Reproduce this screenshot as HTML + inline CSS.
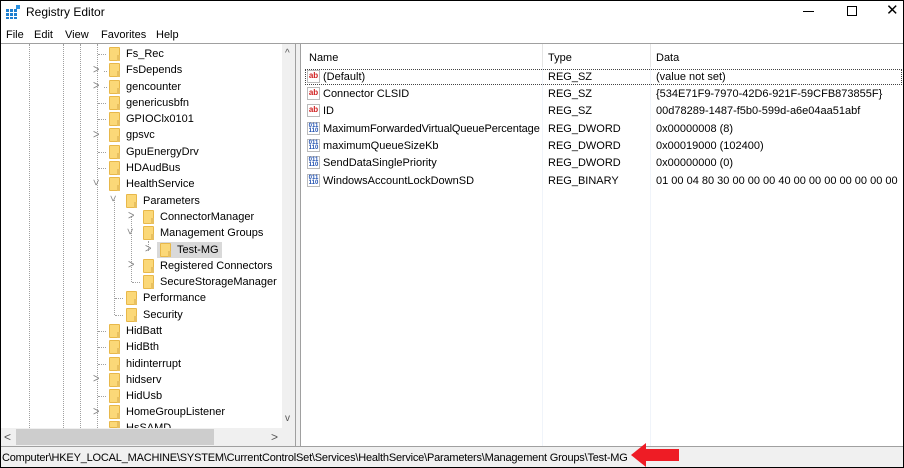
<!DOCTYPE html>
<html><head><meta charset="utf-8"><style>
*{margin:0;padding:0;box-sizing:border-box}
body{width:904px;height:468px;overflow:hidden;background:#fff;font-family:"Liberation Sans",sans-serif;font-size:11px;line-height:16px;color:#000;position:relative}
.a{position:absolute;white-space:nowrap}
.frame{position:absolute;left:0;top:0;width:904px;height:468px;border:1px solid #000;pointer-events:none}
.vd{position:absolute;width:0;border-left:1px dotted #a0a0a0}
.hd{position:absolute;height:0;border-top:1px dotted #a0a0a0}
.f{position:absolute;width:11px;height:14px;background:#fbd878;border:1px solid #e8b84a;border-radius:1px}
.f:after{content:"";position:absolute;right:-1px;bottom:-1px;width:3px;height:6px;background:#e8c060}
.ch{position:absolute;font-size:11px;line-height:13px;color:#888;transform:scaleY(1.2)}
.ic{position:absolute;width:13px;height:13px;border:1px solid #bbb;background:#fff;font-size:8px;font-weight:bold;line-height:10px;text-align:center}
.ab{color:#d02020}
.bin{color:#2050b0;font-size:6px;line-height:5px;padding-top:1px}
</style></head><body>
<svg class="a" style="left:6px;top:5px" width="14" height="14" viewBox="0 0 14 14"><g fill="#1e7fd0"><rect x="0" y="4" width="3" height="3"/><rect x="4" y="4" width="3" height="3"/><rect x="8" y="4" width="3" height="3"/><rect x="0" y="8" width="3" height="3"/><rect x="4" y="8" width="3" height="3"/><rect x="8" y="8" width="3" height="3"/><rect x="0" y="12" width="3" height="2"/><rect x="4" y="12" width="3" height="2"/><rect x="8" y="12" width="3" height="2"/><rect x="10" y="0" width="4" height="4" fill="#2a90e0"/></g></svg>
<div class="a" style="left:26px;top:4px;font-size:12px">Registry Editor</div>
<div class="a" style="left:803px;top:11px;width:11px;height:1px;background:#000"></div>
<div class="a" style="left:847px;top:6px;width:10px;height:10px;border:1px solid #000"></div>
<div class="a" style="left:886px;top:2px;font-size:15px;line-height:18px">✕</div>
<div class="a" style="left:6px;top:27px">File</div>
<div class="a" style="left:34px;top:27px">Edit</div>
<div class="a" style="left:65px;top:27px">View</div>
<div class="a" style="left:101px;top:27px">Favorites</div>
<div class="a" style="left:156px;top:27px">Help</div>
<div class="a" style="left:0;top:43px;width:904px;height:1px;background:#a0a0a0"></div>
<div class="vd" style="left:29px;top:44px;height:384px"></div>
<div class="vd" style="left:63px;top:44px;height:384px"></div>
<div class="vd" style="left:80px;top:44px;height:384px"></div>
<div class="vd" style="left:97px;top:44px;height:384px"></div>
<div class="vd" style="left:114px;top:200px;height:115px"></div>
<div class="vd" style="left:131px;top:216px;height:66px"></div>
<div class="vd" style="left:148px;top:241px;height:10px"></div>

<div class="hd" style="left:98px;top:54px;width:8px"></div><div class="f" style="left:109px;top:47px"></div><div class="a" style="left:126px;top:46px">Fs_Rec</div>
<div class="ch" style="left:93px;top:64px">&gt;</div><div class="hd" style="left:104px;top:71px;width:3px"></div><div class="f" style="left:109px;top:63px"></div><div class="a" style="left:126px;top:62px">FsDepends</div>
<div class="ch" style="left:93px;top:80px">&gt;</div><div class="hd" style="left:104px;top:87px;width:3px"></div><div class="f" style="left:109px;top:80px"></div><div class="a" style="left:126px;top:79px">gencounter</div>
<div class="hd" style="left:98px;top:103px;width:8px"></div><div class="f" style="left:109px;top:96px"></div><div class="a" style="left:126px;top:95px">genericusbfn</div>
<div class="hd" style="left:98px;top:119px;width:8px"></div><div class="f" style="left:109px;top:112px"></div><div class="a" style="left:126px;top:111px">GPIOClx0101</div>
<div class="ch" style="left:93px;top:129px">&gt;</div><div class="f" style="left:109px;top:128px"></div><div class="a" style="left:126px;top:127px">gpsvc</div>
<div class="hd" style="left:98px;top:152px;width:8px"></div><div class="f" style="left:109px;top:145px"></div><div class="a" style="left:126px;top:144px">GpuEnergyDrv</div>
<div class="hd" style="left:98px;top:168px;width:8px"></div><div class="f" style="left:109px;top:161px"></div><div class="a" style="left:126px;top:160px">HDAudBus</div>
<div class="ch" style="left:92px;top:176px;transform:rotate(90deg)">&gt;</div><div class="f" style="left:109px;top:177px"></div><div class="a" style="left:126px;top:176px">HealthService</div>
<div class="ch" style="left:109px;top:192px;transform:rotate(90deg)">&gt;</div><div class="f" style="left:126px;top:194px"></div><div class="a" style="left:143px;top:193px">Parameters</div>
<div class="ch" style="left:128px;top:210px">&gt;</div><div class="f" style="left:143px;top:210px"></div><div class="a" style="left:160px;top:209px">ConnectorManager</div>
<div class="ch" style="left:126px;top:225px;transform:rotate(90deg)">&gt;</div><div class="f" style="left:143px;top:226px"></div><div class="a" style="left:160px;top:225px">Management Groups</div>
<div class="a" style="left:157px;top:242px;width:65px;height:16px;background:#d9d9d9"></div>
<div class="ch" style="left:145px;top:243px">&gt;</div><div class="f" style="left:160px;top:243px"></div><div class="a" style="left:177px;top:242px">Test-MG</div>
<div class="ch" style="left:128px;top:259px">&gt;</div><div class="f" style="left:143px;top:259px"></div><div class="a" style="left:160px;top:258px">Registered Connectors</div>
<div class="hd" style="left:132px;top:282px;width:8px"></div><div class="f" style="left:143px;top:275px"></div><div class="a" style="left:160px;top:274px">SecureStorageManager</div>
<div class="hd" style="left:115px;top:298px;width:8px"></div><div class="f" style="left:126px;top:291px"></div><div class="a" style="left:143px;top:290px">Performance</div>
<div class="hd" style="left:115px;top:315px;width:8px"></div><div class="f" style="left:126px;top:308px"></div><div class="a" style="left:143px;top:307px">Security</div>
<div class="hd" style="left:98px;top:331px;width:8px"></div><div class="f" style="left:109px;top:324px"></div><div class="a" style="left:126px;top:323px">HidBatt</div>
<div class="hd" style="left:98px;top:347px;width:8px"></div><div class="f" style="left:109px;top:340px"></div><div class="a" style="left:126px;top:339px">HidBth</div>
<div class="hd" style="left:98px;top:364px;width:8px"></div><div class="f" style="left:109px;top:357px"></div><div class="a" style="left:126px;top:356px">hidinterrupt</div>
<div class="ch" style="left:93px;top:373px">&gt;</div><div class="f" style="left:109px;top:373px"></div><div class="a" style="left:126px;top:372px">hidserv</div>
<div class="hd" style="left:98px;top:396px;width:8px"></div><div class="f" style="left:109px;top:389px"></div><div class="a" style="left:126px;top:388px">HidUsb</div>
<div class="ch" style="left:93px;top:406px">&gt;</div><div class="f" style="left:109px;top:405px"></div><div class="a" style="left:126px;top:404px">HomeGroupListener</div>
<div class="f" style="left:109px;top:421px;height:7px"></div><div class="a" style="left:126px;top:420px;height:8px;overflow:hidden">HsSAMD</div>
<div class="a" style="left:282px;top:44px;width:13px;height:384px;background:#f0f0f0"></div>
<div class="a" style="left:285px;top:46px;font-size:10px;color:#555">^</div>
<div class="a" style="left:285px;top:411px;font-size:10px;color:#555">v</div>
<div class="a" style="left:0;top:428px;width:295px;height:18px;background:#f0f0f0"></div>
<div class="a" style="left:16px;top:429px;width:198px;height:16px;background:#cdcdcd"></div>
<div class="a" style="left:4px;top:429px;font-size:12px;color:#555">&lt;</div>
<div class="a" style="left:271px;top:429px;font-size:12px;color:#555">&gt;</div>
<div class="a" style="left:295px;top:44px;width:1px;height:403px;background:#a0a0a0"></div>
<div class="a" style="left:296px;top:44px;width:4px;height:403px;background:#f0f0f0"></div>
<div class="a" style="left:300px;top:44px;width:1px;height:403px;background:#a0a0a0"></div>
<div class="a" style="left:542px;top:44px;width:1px;height:23px;background:#e5e5e5"></div>
<div class="a" style="left:650px;top:44px;width:1px;height:23px;background:#e5e5e5"></div>
<div class="a" style="left:542px;top:67px;width:1px;height:380px;background:#f0f4fa"></div>
<div class="a" style="left:650px;top:67px;width:1px;height:380px;background:#f0f4fa"></div>
<div class="a" style="left:309px;top:50px">Name</div>
<div class="a" style="left:548px;top:50px">Type</div>
<div class="a" style="left:656px;top:50px">Data</div>
<div class="a" style="left:305px;top:69px;width:597px;height:16px;border:1px dotted #444"></div>

<div class="ic ab" style="left:307px;top:70px">ab</div><div class="a" style="left:323px;top:69px">(Default)</div><div class="a" style="left:548px;top:69px">REG_SZ</div><div class="a" style="left:656px;top:69px">(value not set)</div>
<div class="ic ab" style="left:307px;top:87px">ab</div><div class="a" style="left:323px;top:86px">Connector CLSID</div><div class="a" style="left:548px;top:86px">REG_SZ</div><div class="a" style="left:656px;top:86px">{534E71F9-7970-42D6-921F-59CFB873855F}</div>
<div class="ic ab" style="left:307px;top:104px">ab</div><div class="a" style="left:323px;top:103px">ID</div><div class="a" style="left:548px;top:103px">REG_SZ</div><div class="a" style="left:656px;top:103px">00d78289-1487-f5b0-599d-a6e04aa51abf</div>
<div class="ic bin" style="left:307px;top:122px">011<br>110</div><div class="a" style="left:323px;top:121px;letter-spacing:-0.1px">MaximumForwardedVirtualQueuePercentage</div><div class="a" style="left:548px;top:121px">REG_DWORD</div><div class="a" style="left:656px;top:121px">0x00000008 (8)</div>
<div class="ic bin" style="left:307px;top:139px">011<br>110</div><div class="a" style="left:323px;top:138px">maximumQueueSizeKb</div><div class="a" style="left:548px;top:138px">REG_DWORD</div><div class="a" style="left:656px;top:138px">0x00019000 (102400)</div>
<div class="ic bin" style="left:307px;top:156px">011<br>110</div><div class="a" style="left:323px;top:155px">SendDataSinglePriority</div><div class="a" style="left:548px;top:155px">REG_DWORD</div><div class="a" style="left:656px;top:155px">0x00000000 (0)</div>
<div class="ic bin" style="left:307px;top:174px">011<br>110</div><div class="a" style="left:323px;top:173px">WindowsAccountLockDownSD</div><div class="a" style="left:548px;top:173px">REG_BINARY</div><div class="a" style="left:656px;top:173px;width:245px;overflow:hidden">01 00 04 80 30 00 00 00 40 00 00 00 00 00 00 00 14 0...</div>
<div class="a" style="left:0;top:446px;width:904px;height:22px;background:#f0f0f0;border-top:1px solid #a0a0a0"></div>
<div class="a" style="left:2px;top:450px;letter-spacing:-0.2px">Computer\HKEY_LOCAL_MACHINE\SYSTEM\CurrentControlSet\Services\HealthService\Parameters\Management Groups\Test-MG</div>
<svg class="a" style="left:631px;top:443px" width="48" height="24" viewBox="0 0 48 24"><polygon points="0,12 15,0 15,6 48,6 48,18 15,18 15,24" fill="#ee1c25"/></svg>
<div class="frame"></div>
</body></html>
